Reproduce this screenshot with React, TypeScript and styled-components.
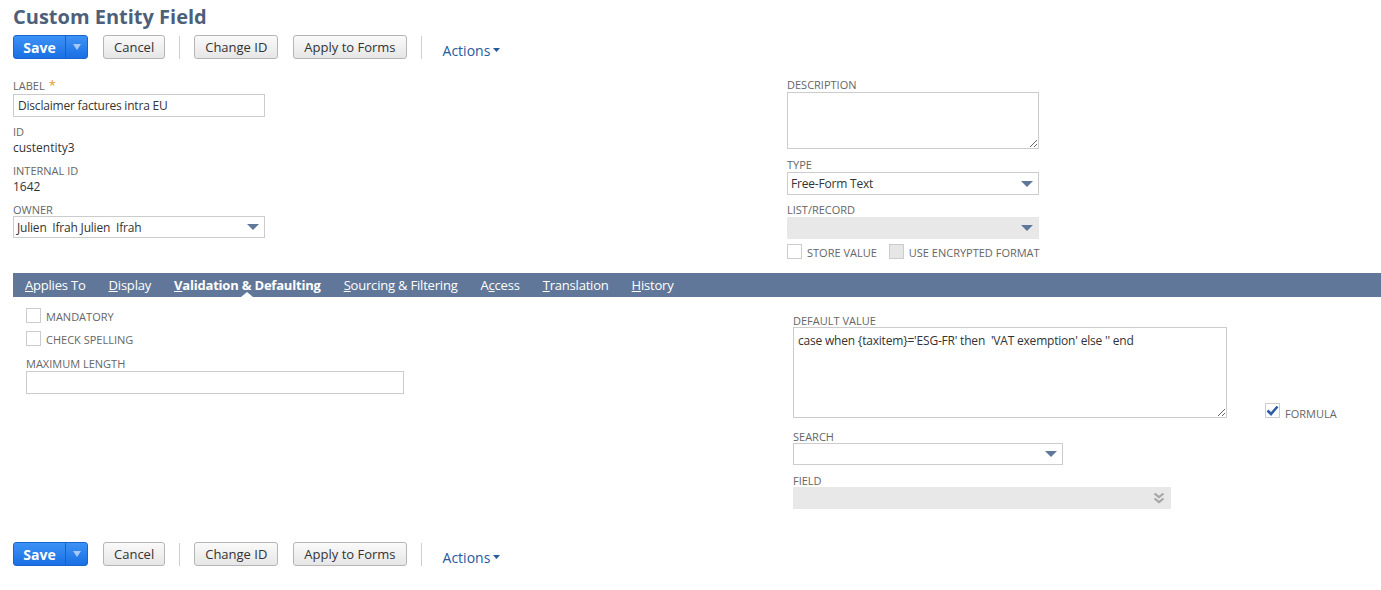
import React from "react";
import styled, { createGlobalStyle } from "styled-components";

const GlobalStyle = createGlobalStyle`
body{
margin:0;
background:#fff;
font-family:"Open Sans", "Liberation Sans", sans-serif;
color:#333;
}
`

const Page = styled.div`
width:1381px;
padding-left:13px;
box-sizing:border-box;
`

const Title = styled.h1`
margin:0;
padding-top:3px;
font-size:20px;
line-height:27px;
font-weight:700;
color:#4d5f79;
`

const Toolbar = styled.div<{ $top: number }>`
display:flex;
align-items:center;
height:24px;
margin-top:${p => p.$top}px;
`

const SaveGroup = styled.div`
display:flex;
height:24px;
box-sizing:border-box;
border:1px solid #1a64cf;
border-radius:3px;
overflow:hidden;
background:linear-gradient(#3d92f6, #1a6fe4);
margin-right:15px;
`

const SaveMain = styled.div`
width:51px;
display:flex;
align-items:center;
justify-content:center;
color:#fff;
font-weight:700;
font-size:14px;
border-right:1px solid #1a5fc4;
`

const SaveArrow = styled.div`
width:21px;
display:flex;
align-items:center;
justify-content:center;
`

const Button = styled.div`
height:24px;
box-sizing:border-box;
display:flex;
align-items:center;
padding:0 10px;
border:1px solid #b5b5b5;
border-radius:3px;
background:linear-gradient(#fafafa, #e6e6e6);
font-size:13px;
color:#333;
margin-right:15px;
`

const Separator = styled.div`
width:1px;
height:23px;
background:#cfcfcf;
margin-right:14px;
margin-left:-1px;
`

const Actions = styled.div`
display:flex;
align-items:center;
gap:3px;
margin-left:7px;
padding-top:6px;
font-size:14px;
color:#255a9f;
`

const FormGrid = styled.div<{ $left: number; $top: number }>`
display:grid;
grid-template-columns:${p => p.$left}px 1fr;
margin-top:${p => p.$top}px;
`

const Column = styled.div`
display:flex;
flex-direction:column;
`

const Field = styled.div<{ $top?: number }>`
display:flex;
flex-direction:column;
margin-top:${p => p.$top ?? 0}px;
`

const Label = styled.div<{ $mb?: number; $top?: number }>`
font-size:11px;
line-height:14px;
color:#666;
text-transform:uppercase;
margin-bottom:${p => p.$mb ?? 2}px;
margin-top:${p => p.$top ?? 0}px;
`

const Required = styled.span`
color:#e49b2b;
font-size:13px;
margin-left:4px;
`

const Value = styled.div`
font-size:12px;
line-height:16px;
margin-top:1px;
color:#333;
`

const TextInput = styled.input<{ $w: number }>`
width:${p => p.$w}px;
height:23px;
box-sizing:border-box;
border:1px solid #ccc;
padding:0 4px;
margin:0;
font-family:inherit;
font-size:12px;
letter-spacing:-0.2px;
color:#333;
outline:none;
`

const TextArea = styled.textarea<{ $w: number; $h: number }>`
width:${p => p.$w}px;
height:${p => p.$h}px;
box-sizing:border-box;
border:1px solid #ccc;
padding:4px 4px;
margin:0;
font-family:inherit;
font-size:12px;
letter-spacing:-0.2px;
color:#333;
outline:none;
resize:both;
display:block;
`

const Select = styled.div<{ $w: number; $h?: number; $disabled?: boolean }>`
width:${p => p.$w}px;
height:${p => p.$h ?? 22}px;
box-sizing:border-box;
border:1px solid ${p => (p.$disabled ? "#e8e8e8" : "#ccc")};
background:${p => (p.$disabled ? "#e8e8e8" : "#fff")};
display:flex;
align-items:center;
justify-content:space-between;
padding:0 5px 0 3px;
font-size:12px;
letter-spacing:-0.2px;
color:#333;
white-space:pre;
`

const CheckRow = styled.div<{ $top?: number }>`
display:flex;
align-items:flex-end;
gap:12px;
margin-top:${p => p.$top ?? 0}px;
`

const Check = styled.label<{ $top?: number; $drop?: number }>`
display:flex;
align-items:flex-end;
gap:5px;
font-size:11px;
line-height:12px;
color:#666;
text-transform:uppercase;
margin-top:${p => p.$top ?? 0}px;
span + span{ position:relative; top:${p => p.$drop ?? 0}px; }
`

const Box = styled.span<{ $disabled?: boolean }>`
width:15px;
height:15px;
box-sizing:border-box;
border:1px solid #ccc;
background:${p => (p.$disabled ? "#e6e6e6" : "#fff")};
display:flex;
align-items:center;
justify-content:center;
`

const TabBar = styled.div`
height:24px;
background:#607799;
display:flex;
align-items:stretch;
gap:23px;
padding-left:12px;
margin-top:14px;
`

const Tab = styled.div<{ $active?: boolean }>`
position:relative;
display:flex;
align-items:center;
font-size:13px;
color:#fff;
font-weight:${p => (p.$active ? 700 : 400)};
letter-spacing:-0.2px;
u{ text-decoration:underline; text-underline-offset:1px; }
`

const Pointer = styled.span`
position:absolute;
left:50%;
bottom:0;
margin-left:-6px;
width:0;
height:0;
border-left:6px solid transparent;
border-right:6px solid transparent;
border-bottom:5px solid #fff;
`

const TabContent = styled.div`
display:grid;
grid-template-columns:767px 1fr;
padding-left:13px;
`

const SubColumn = styled.div<{ $top: number }>`
display:flex;
flex-direction:column;
padding-top:${p => p.$top}px;
`

const DefaultRow = styled.div`
display:flex;
align-items:flex-end;
gap:38px;
`

const Down = ({ color = "#5f7799" }: { color?: string }) => (
  <svg width="12" height="6" viewBox="0 0 12 6">
    <path d="M0 0 H12 L6 6 Z" fill={color} />
  </svg>
)

const DoubleChevron = () => (
  <svg width="12" height="12" viewBox="0 0 12 12">
    <path d="M1.5 1.5 L6 5 L10.5 1.5" fill="none" stroke="#a6a6a6" strokeWidth="2.2" />
    <path d="M1.5 6.5 L6 10 L10.5 6.5" fill="none" stroke="#a6a6a6" strokeWidth="2.2" />
  </svg>
)

const Tick = () => (
  <svg width="13" height="11" viewBox="0 0 13 11">
    <path d="M1.5 5.5 L5 9 L11.5 1.5" fill="none" stroke="#2f5ca8" strokeWidth="2.6" />
  </svg>
)

const ButtonBar: React.FC<{ top: number }> = ({ top }) => (
  <Toolbar $top={top}>
    <SaveGroup>
      <SaveMain>Save</SaveMain>
      <SaveArrow>
        <svg width="8" height="6" viewBox="0 0 8 6">
          <path d="M0 0 H8 L4 6 Z" fill="#a9c9f3" />
        </svg>
      </SaveArrow>
    </SaveGroup>
    <Button>Cancel</Button>
    <Separator />
    <Button>Change ID</Button>
    <Button>Apply to Forms</Button>
    <Separator />
    <Actions>
      Actions
      <svg width="7" height="4" viewBox="0 0 7 4">
        <path d="M0 0 H7 L3.5 4 Z" fill="#255a9f" />
      </svg>
    </Actions>
  </Toolbar>
)

const App: React.FC = () => {
  return (
    <Page>
      <GlobalStyle />
      <Title>Custom Entity Field</Title>
      <ButtonBar top={5} />

      <FormGrid $left={774} $top={19}>
        <Column>
          <Field>
            <Label $mb={1}>Label<Required>*</Required></Label>
            <TextInput $w={252} defaultValue="Disclaimer factures intra EU" />
          </Field>
          <Field $top={8}>
            <Label $mb={0}>ID</Label>
            <Value>custentity3</Value>
          </Field>
          <Field $top={8}>
            <Label $mb={0}>Internal ID</Label>
            <Value>1642</Value>
          </Field>
          <Field $top={8}>
            <Label $mb={-1}>Owner</Label>
            <Select $w={252}>
              <span>Julien  Ifrah Julien  Ifrah</span>
              <Down />
            </Select>
          </Field>
        </Column>

        <Column>
          <Field>
            <Label $mb={0}>Description</Label>
            <TextArea $w={252} $h={57} readOnly />
          </Field>
          <Field $top={9}>
            <Label $mb={0}>Type</Label>
            <Select $w={252} $h={23}>
              <span>Free-Form Text</span>
              <Down />
            </Select>
          </Field>
          <Field $top={8}>
            <Label $mb={0}>List/Record</Label>
            <Select $w={252} $disabled>
              <span />
              <Down />
            </Select>
          </Field>
          <CheckRow $top={5}>
            <Check><Box /><span>Store Value</span></Check>
            <Check><Box $disabled /><span>Use Encrypted Format</span></Check>
          </CheckRow>
        </Column>
      </FormGrid>

      <TabBar>
        <Tab><span><u>A</u>pplies To</span></Tab>
        <Tab><span><u>D</u>isplay</span></Tab>
        <Tab $active><span><u>V</u>alidation &amp; Defaulting</span><Pointer /></Tab>
        <Tab><span><u>S</u>ourcing &amp; Filtering</span></Tab>
        <Tab><span>A<u>c</u>cess</span></Tab>
        <Tab><span><u>T</u>ranslation</span></Tab>
        <Tab><span><u>H</u>istory</span></Tab>
      </TabBar>

      <TabContent>
        <SubColumn $top={11}>
          <Check><Box /><span>Mandatory</span></Check>
          <Check $top={8}><Box /><span>Check Spelling</span></Check>
          <Label $top={11} $mb={0}>Maximum Length</Label>
          <TextInput $w={378} />
        </SubColumn>

        <SubColumn $top={17}>
          <Label $mb={-1}>Default Value</Label>
          <DefaultRow>
            <TextArea
              $w={434}
              $h={91}
              readOnly
              defaultValue={"case when {taxitem}='ESG-FR' then  'VAT exemption' else '' end"}
            />
            <Check $drop={2}><Box><Tick /></Box><span>Formula</span></Check>
          </DefaultRow>
          <Label $top={12} $mb={-1}>Search</Label>
          <Select $w={270}>
            <span />
            <Down />
          </Select>
          <Label $top={9} $mb={-1}>Field</Label>
          <Select $w={378} $disabled>
            <span />
            <DoubleChevron />
          </Select>
        </SubColumn>
      </TabContent>

      <ButtonBar top={33} />
    </Page>
  )
}

export default App
